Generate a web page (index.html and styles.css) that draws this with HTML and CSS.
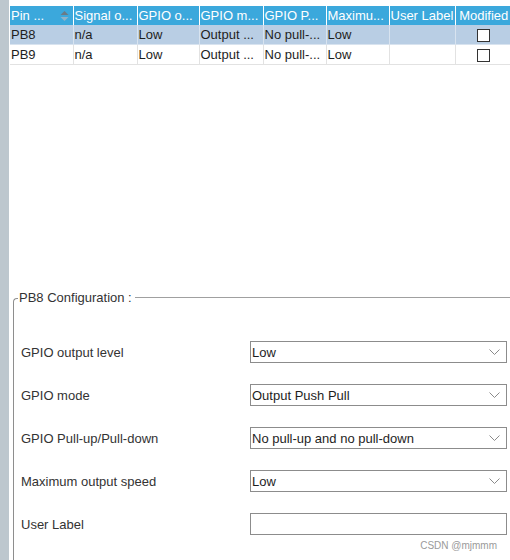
FILE: index.html
```html
<!DOCTYPE html>
<html>
<head>
<meta charset="utf-8">
<link rel="stylesheet" href="styles.css">
</head>
<body>
<div class="app">
  <div class="sidebar"></div>
  <div class="main">
    <div class="table-area">
      <table class="grid">
        <colgroup>
          <col class="c1"><col class="c2"><col class="c3"><col class="c4"><col class="c5"><col class="c6"><col class="c7"><col class="c8">
        </colgroup>
        <thead>
          <tr>
            <th><span class="pin-h">Pin ...<svg class="sort" width="9" height="12" viewBox="0 0 9 12"><path d="M0.5 5 L4.5 1 L8.5 5 Z" fill="#6b7b86"/><path d="M0.5 7 L4.5 11 L8.5 7 Z" fill="#8fb3c8"/></svg></span></th>
            <th>Signal o...</th>
            <th>GPIO o...</th>
            <th>GPIO m...</th>
            <th>GPIO P...</th>
            <th>Maximu...</th>
            <th>User Label</th>
            <th class="center">Modified</th>
          </tr>
        </thead>
        <tbody>
          <tr class="sel">
            <td>PB8</td><td>n/a</td><td>Low</td><td>Output ...</td><td>No pull-...</td><td>Low</td><td></td><td class="center"><span class="cb"></span></td>
          </tr>
          <tr>
            <td>PB9</td><td>n/a</td><td>Low</td><td>Output ...</td><td>No pull-...</td><td>Low</td><td></td><td class="center"><span class="cb"></span></td>
          </tr>
        </tbody>
      </table>
    </div>
    <div class="config">
      <div class="legend-row">
        <span class="corner"></span>
        <span class="legend">PB8 Configuration :</span>
        <span class="rule"></span>
      </div>
      <div class="form">
        <div class="field"><span class="label">GPIO output level</span><div class="select"><span>Low</span><svg class="chev" width="11" height="7" viewBox="0 0 11 7"><path d="M0.5 0.5 L5.5 5.5 L10.5 0.5" fill="none" stroke="#8a8a8a" stroke-width="1"/></svg></div></div>
        <div class="field"><span class="label">GPIO mode</span><div class="select"><span>Output Push Pull</span><svg class="chev" width="11" height="7" viewBox="0 0 11 7"><path d="M0.5 0.5 L5.5 5.5 L10.5 0.5" fill="none" stroke="#8a8a8a" stroke-width="1"/></svg></div></div>
        <div class="field"><span class="label">GPIO Pull-up/Pull-down</span><div class="select"><span>No pull-up and no pull-down</span><svg class="chev" width="11" height="7" viewBox="0 0 11 7"><path d="M0.5 0.5 L5.5 5.5 L10.5 0.5" fill="none" stroke="#8a8a8a" stroke-width="1"/></svg></div></div>
        <div class="field"><span class="label">Maximum output speed</span><div class="select"><span>Low</span><svg class="chev" width="11" height="7" viewBox="0 0 11 7"><path d="M0.5 0.5 L5.5 5.5 L10.5 0.5" fill="none" stroke="#8a8a8a" stroke-width="1"/></svg></div></div>
        <div class="field"><span class="label">User Label</span><div class="input"></div></div>
      </div>
      <div class="watermark">CSDN @mjmmm</div>
    </div>
  </div>
</div>
</body>
</html>
```

FILE: styles.css
```css
html, body {
  margin: 0;
  padding: 0;
  background: #ffffff;
}
body {
  font-family: "Liberation Sans", Arial, sans-serif;
  font-size: 13px;
  color: #1e1e1e;
}
.app {
  display: flex;
  width: 510px;
  height: 560px;
  overflow: hidden;
}
.sidebar {
  width: 9px;
  flex: none;
  background: #bdc7ce;
}
.main {
  flex: 1;
  display: flex;
  flex-direction: column;
  padding-left: 1px;
  min-width: 0;
}
.table-area {
  height: 288px;
  padding-top: 6px;
  box-sizing: border-box;
}
.grid {
  border-collapse: collapse;
  table-layout: fixed;
  width: 501px;
}
.c1 { width: 63px; }
.c2 { width: 64px; }
.c3 { width: 62px; }
.c4 { width: 64px; }
.c5 { width: 63px; }
.c6 { width: 63px; }
.c7 { width: 66px; }
.c8 { width: 56px; }
.grid th {
  background: #3ba8dc;
  color: #ffffff;
  font-weight: normal;
  text-align: left;
  height: 19px;
  padding: 0 0 0 1px;
  border-right: 1px solid #ffffff;
  white-space: nowrap;
  overflow: hidden;
  font-size: 13px;
}
.grid th:last-child { border-right: none; }
.grid td {
  height: 19px;
  padding: 0 0 0 1px;
  border-right: 1px solid #e2e2e2;
  border-bottom: 1px solid #e2e2e2;
  white-space: nowrap;
  overflow: hidden;
  font-size: 13px;
}
.grid td:last-child { border-right: none; }
.grid tr.sel td {
  background: #b9cee4;
  border-right-color: #d8e3ef;
  border-bottom-color: #d8e3ef;
}
.grid .center { text-align: center; }
.pin-h {
  display: flex;
  align-items: center;
  justify-content: space-between;
  padding-right: 4px;
}
.cb {
  display: inline-block;
  width: 11px;
  height: 11px;
  border: 1px solid #333333;
  background: #ffffff;
  vertical-align: middle;
}
.config {
  flex: 1;
  display: flex;
  flex-direction: column;
  padding-left: 3px;
  position: relative;
}
.legend-row {
  display: flex;
  align-items: center;
  height: 18px;
}
.corner {
  width: 5px;
  height: 9px;
  align-self: flex-end;
  border-left: 1px solid #8e8e8e;
  border-top: 1px solid #8e8e8e;
  border-top-left-radius: 4px;
  margin-bottom: -1px;
  box-sizing: border-box;
}
.legend {
  color: #333333;
  padding: 0 3px 0 1px;
  white-space: nowrap;
}
.rule {
  flex: 1;
  height: 1px;
  background: #a0a0a0;
}
.form {
  flex: 1;
  border-left: 1px solid #8e8e8e;
  padding: 35px 3px 0 7px;
  display: flex;
  flex-direction: column;
  gap: 21px;
}
.field {
  display: flex;
  align-items: center;
  height: 22px;
}
.label {
  width: 229px;
  flex: none;
  color: #333333;
}
.select, .input {
  flex: none;
  width: 257px;
  height: 22px;
  box-sizing: border-box;
  border: 1px solid #8c8c8c;
  display: flex;
  align-items: center;
  justify-content: space-between;
  padding: 0 6px 0 1px;
  color: #1e1e1e;
  background: #ffffff;
}
.chev { flex: none; }
.watermark {
  position: absolute;
  right: 13px;
  bottom: 9px;
  font-size: 10px;
  color: #9a9a9a;
}
```
